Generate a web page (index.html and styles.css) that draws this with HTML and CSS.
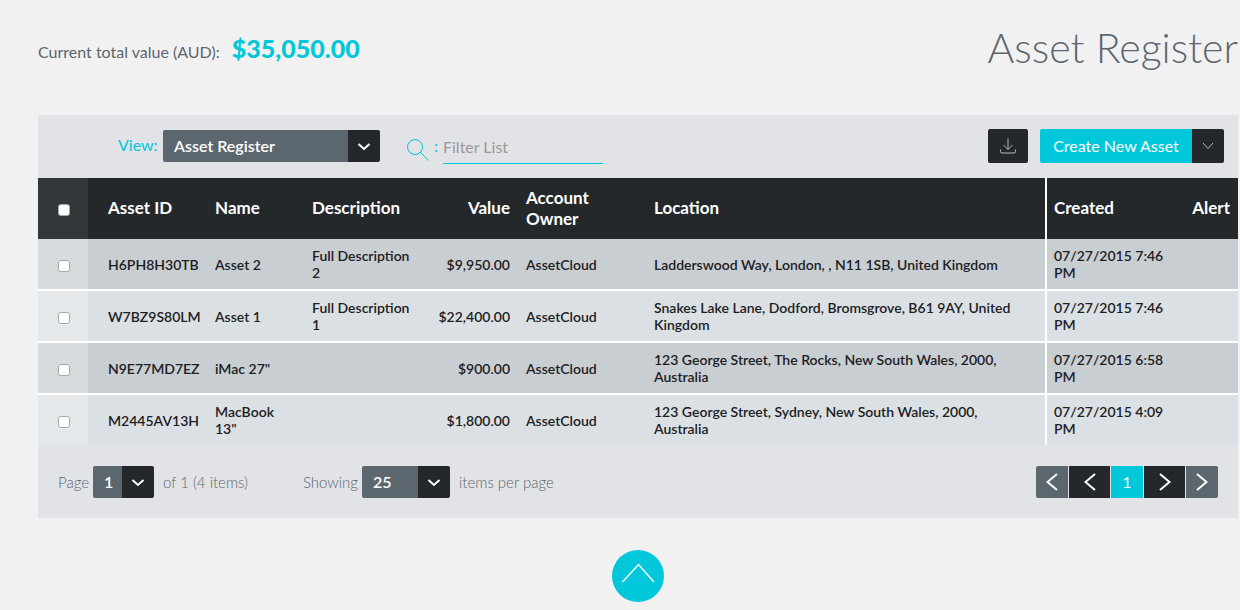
FILE: index.html
```html
<!DOCTYPE html>
<html lang="en">
<head>
  <meta charset="UTF-8">
  <meta name="viewport" content="width=device-width, initial-scale=1.0">
  <title>Asset Register</title>
  <link rel="stylesheet" href="styles.css">
</head>
<body>
  <!-- Page Header -->
  <header class="page-header">
    <p class="total">Current total value (AUD): <strong>$35,050.00</strong></p>
    <h1>Asset Register</h1>
  </header>

  <main class="panel">
    <!-- Toolbar -->
    <div class="toolbar">
      <label class="view-label" for="view">View:</label>
      <div class="select view-select">
        <select id="view">
          <option>Asset Register</option>
        </select>
        <svg viewBox="0 0 32 32"><path d="M10.500 14 L16 19 L21.500 14"/></svg>
      </div>
      <label class="filter-label" for="filter">
        <svg width="24" height="24" viewBox="0 0 24 24"><circle cx="9" cy="9" r="7.500"/><path d="M14 14 L22.500 22.500"/></svg>
        <span>:</span>
      </label>
      <input class="filter" type="text" id="filter" placeholder="Filter List">

      <div class="actions">
        <button class="download" aria-label="Download">
          <svg width="16" height="16" viewBox="0 0 16 16"><path d="M8 0.500 V11.500 M3.500 7 L8 11.500 L12.500 7 M0.500 11.500 V13.500 Q0.500 15 2 15 H14 Q15.500 15 15.500 13.500 V11.500"/></svg>
        </button>
        <div class="split-button">
          <button class="create">Create New Asset</button>
          <button class="create-more" aria-label="More">
            <svg width="12" height="12" viewBox="0 0 12 12"><path d="M1 3 L6 8.500 L11 3"/></svg>
          </button>
        </div>
      </div>
    </div>

    <!-- Asset Table -->
    <table>
      <colgroup>
        <col class="col-check">
        <col class="col-id">
        <col class="col-name">
        <col class="col-desc">
        <col class="col-value">
        <col class="col-owner">
        <col class="col-location">
        <col class="col-created">
        <col class="col-alert">
      </colgroup>
      <thead>
        <tr>
          <th class="check"><input type="checkbox" aria-label="Select all"></th>
          <th class="id">Asset ID</th>
          <th>Name</th>
          <th>Description</th>
          <th class="number">Value</th>
          <th>Account Owner</th>
          <th>Location</th>
          <th class="created">Created</th>
          <th class="number">Alert</th>
        </tr>
      </thead>
      <tbody>
        <tr>
          <td class="check"><input type="checkbox" aria-label="Select H6PH8H30TB"></td>
          <td class="id">H6PH8H30TB</td>
          <td>Asset 2</td>
          <td>Full Description 2</td>
          <td class="number">$9,950.00</td>
          <td>AssetCloud</td>
          <td class="location">Ladderswood Way, London, , N11 1SB, United Kingdom</td>
          <td class="created">07/27/2015 7:46 PM</td>
          <td></td>
        </tr>
        <tr>
          <td class="check"><input type="checkbox" aria-label="Select W7BZ9S80LM"></td>
          <td class="id">W7BZ9S80LM</td>
          <td>Asset 1</td>
          <td>Full Description 1</td>
          <td class="number">$22,400.00</td>
          <td>AssetCloud</td>
          <td class="location">Snakes Lake Lane, Dodford, Bromsgrove, B61 9AY, United Kingdom</td>
          <td class="created">07/27/2015 7:46 PM</td>
          <td></td>
        </tr>
        <tr>
          <td class="check"><input type="checkbox" aria-label="Select N9E77MD7EZ"></td>
          <td class="id">N9E77MD7EZ</td>
          <td>iMac 27"</td>
          <td></td>
          <td class="number">$900.00</td>
          <td>AssetCloud</td>
          <td class="location">123 George Street, The Rocks, New South Wales, 2000, Australia</td>
          <td class="created">07/27/2015 6:58 PM</td>
          <td></td>
        </tr>
        <tr>
          <td class="check"><input type="checkbox" aria-label="Select M2445AV13H"></td>
          <td class="id">M2445AV13H</td>
          <td>MacBook 13"</td>
          <td></td>
          <td class="number">$1,800.00</td>
          <td>AssetCloud</td>
          <td class="location">123 George Street, Sydney, New South Wales, 2000, Australia</td>
          <td class="created">07/27/2015 4:09 PM</td>
          <td></td>
        </tr>
      </tbody>
    </table>

    <!-- Paging -->
    <div class="footer">
      <div class="page-picker">
        <label for="page">Page</label>
        <div class="select page-select">
          <select id="page">
            <option>1</option>
          </select>
          <svg viewBox="0 0 32 32"><path d="M10.500 14 L16 19 L21.500 14"/></svg>
        </div>
        <span>of 1 (4 items)</span>
      </div>
      <div class="page-picker">
        <label for="size">Showing</label>
        <div class="select size-select">
          <select id="size">
            <option>25</option>
          </select>
          <svg viewBox="0 0 32 32"><path d="M10.500 14 L16 19 L21.500 14"/></svg>
        </div>
        <span>items per page</span>
      </div>
      <nav class="pager">
        <button class="end first" aria-label="First page"><svg width="12" height="18" viewBox="0 0 12 18"><path d="M11 1 L1.500 9 L11 17"/></svg></button>
        <button class="step" aria-label="Previous page"><svg width="12" height="18" viewBox="0 0 12 18"><path d="M11 1 L1.500 9 L11 17"/></svg></button>
        <button class="current">1</button>
        <button class="step" aria-label="Next page"><svg width="12" height="18" viewBox="0 0 12 18"><path d="M1 1 L10.500 9 L1 17"/></svg></button>
        <button class="end last" aria-label="Last page"><svg width="12" height="18" viewBox="0 0 12 18"><path d="M1 1 L10.500 9 L1 17"/></svg></button>
      </nav>
    </div>
  </main>

  <a class="to-top" href="#" aria-label="Back to top">
    <svg width="34" height="20" viewBox="0 0 34 20"><path d="M1.500 19 L17.500 1.500 L33 19"/></svg>
  </a>
</body>
</html>
```
FILE: styles.css
```css
/* General Styling */
* {
  box-sizing: border-box;
}

body {
  margin: 0;
  padding: 0 2px 8px 38px;
  background-color: #f1f1f1;
  color: #5c666e;
  font-family: Lato, "Open Sans", sans-serif;
  font-size: 14px;
}

button,
input,
select {
  font-family: inherit;
}

button {
  display: flex;
  align-items: center;
  justify-content: center;
  padding: 0;
  border: none;
  color: #fff;
  cursor: pointer;
}

svg {
  display: block;
  fill: none;
  stroke: #fff;
}

/* Page Header */
.page-header {
  display: flex;
  align-items: center;
  justify-content: space-between;
  height: 115px;
  padding-bottom: 20px;
}

.total {
  margin: 0;
  font-size: 16px;
}

.total strong {
  margin-left: 8px;
  color: #00c8da;
  font-size: 25px;
  font-weight: 900;
}

h1 {
  margin: 0;
  font-size: 41px;
  font-weight: 300;
}

/* Panel */
.panel {
  background-color: #e1e3e7;
}

/* Toolbar */
.toolbar {
  display: flex;
  align-items: center;
  height: 63px;
  padding: 0 14px 2px 80px;
}

.view-label,
.filter-label {
  color: #00c8da;
  font-size: 16px;
}

.view-label {
  width: 45px;
  padding-bottom: 3px;
}

.filter-label {
  display: flex;
  align-items: center;
  gap: 4px;
  margin-left: 26px;
}

.filter-label svg {
  margin-top: 8px;
  stroke: #00c8da;
}

.filter {
  width: 160px;
  height: 36px;
  margin-left: 5px;
  padding: 2px 0 0;
  border: none;
  border-bottom: 1px solid #00c8da;
  background: none;
  color: #5c666e;
  font-size: 16px;
  outline: none;
}

.filter::placeholder {
  color: #999;
}

.actions {
  display: flex;
  gap: 12px;
  margin-left: auto;
}

.actions button {
  height: 34px;
}

.download {
  width: 40px;
  border-radius: 2px;
  background-color: #24282b;
}

.download svg,
.create-more svg {
  stroke: #b5b8ba;
}

.split-button {
  display: flex;
}

.actions .create {
  width: 152px;
  border-radius: 2px 0 0 2px;
  background-color: #00c8da;
  font-size: 16px;
  font-weight: 400;
}

.create-more {
  width: 32px;
  border-radius: 0 2px 2px 0;
  background-color: #24282b;
}

/* Drop-downs */
.select {
  position: relative;
  height: 32px;
}

.select select {
  width: 100%;
  height: 32px;
  padding: 0 32px 0 11px;
  appearance: none;
  border: none;
  border-radius: 2px;
  background: linear-gradient(to left, #24282b 32px, #5c666e 32px);
  color: #fff;
  font-size: 16px;
  font-weight: 600;
}

.select svg {
  position: absolute;
  top: 0;
  right: 0;
  width: 32px;
  height: 32px;
  pointer-events: none;
  stroke-width: 2;
}

.view-select {
  width: 217px;
}

.page-select {
  width: 61px;
}

.size-select {
  width: 88px;
}

/* Asset Table */
table {
  width: 100%;
  border-spacing: 0;
  table-layout: fixed;
}

.col-check { width: 50px; }
.col-id { width: 119px; }
.col-name { width: 97px; }
.col-desc { width: 118px; }
.col-value { width: 96px; }
.col-owner { width: 128px; }
.col-created { width: 129px; }
.col-alert { width: 64px; }

th,
td {
  padding: 8px;
  text-align: left;
}

th {
  height: 61px;
  padding-bottom: 10px;
  background-color: #24282b;
  color: #fff;
  font-size: 17px;
  line-height: 21px;
}

td {
  height: 52px;
  border-bottom: 2px solid #fff;
  color: #1c2023;
  font-weight: 600;
  line-height: 17px;
}

tbody tr {
  background-color: #dbe0e4;
}

tbody tr:nth-child(odd) {
  background-color: #c9ced2;
}

tbody tr:last-child td {
  height: 50px;
  border-bottom: none;
}

.id {
  padding-left: 20px;
}

.number {
  text-align: right;
}

.location {
  padding-right: 16px;
}

.created {
  padding-left: 7px;
  border-left: 2px solid #fff;
}

.check {
  padding: 8px 8px 8px 10px;
  background-color: rgba(255, 255, 255, 0.25);
  background-clip: padding-box;
  text-align: center;
}

th.check {
  background-color: #323639;
}

.check input {
  width: 12px;
  height: 12px;
  margin: 6px 0 0;
  appearance: none;
  border: 1px solid #aaa;
  border-radius: 3px;
  background-color: #fff;
}

/* Paging */
.footer {
  display: flex;
  align-items: center;
  gap: 55px;
  height: 73px;
  padding: 0 20px;
}

.page-picker {
  display: flex;
  align-items: center;
  gap: 4px;
  font-size: 15px;
  font-weight: 300;
}

.page-picker span {
  margin-left: 5px;
}

.pager {
  display: flex;
  gap: 1px;
  margin-left: auto;
}

.pager button {
  width: 32px;
  height: 32px;
  font-size: 16px;
}

.pager .step {
  width: 41px;
  background-color: #24282b;
}

.pager .end {
  background-color: #5c666e;
}

.pager .first {
  border-radius: 2px 0 0 2px;
}

.pager .last {
  border-radius: 0 2px 2px 0;
}

.pager .current {
  background-color: #00c8da;
}

.pager svg {
  stroke-width: 2;
}

/* Back to top */
.to-top {
  display: flex;
  align-items: center;
  justify-content: center;
  width: 52px;
  height: 52px;
  margin: 32px auto 0;
  padding-bottom: 6px;
  border-radius: 50%;
  background-color: #00c8da;
}

.to-top svg {
  stroke-width: 1.5;
}
```
